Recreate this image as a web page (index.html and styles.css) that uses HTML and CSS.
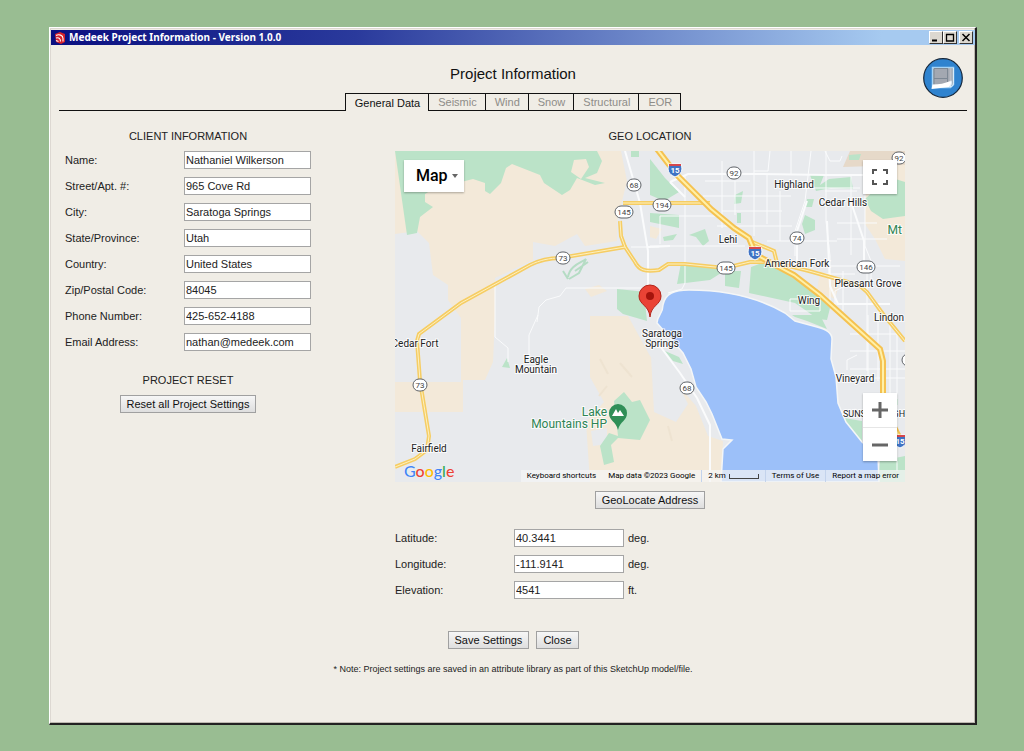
FILE: index.html
```
<!DOCTYPE html>
<html lang="en">
<head>
  <meta charset="UTF-8" />
  <meta name="viewport" content="width=device-width, initial-scale=1" />
  <title>Medeek Project Information - Version 1.0.0</title>
  <link rel="stylesheet" href="styles.css">
</head>
<body>

  <div class="window">
    <div class="title-bar">
      <svg class="app-icon" viewBox="0 0 12 12" aria-hidden="true">
        <path d="M1 2 6 0l5 2v8l-4 2-5-2z" fill="#d8222a" />
        <path d="M2 3.500c3-1.500 7-.5 7 3v3M2 6c3-.8 4.500.5 4.500 3.500M2 8.500l2.500 1" fill="none" stroke="#fff" stroke-width="1.100" />
      </svg>
      <span class="title-text">Medeek Project Information - Version 1.0.0</span>
      <div class="window-buttons">
        <button type="button" aria-label="Minimize">
          <svg viewBox="0 0 10 9"><path d="M1 7.500h5" stroke="#000" stroke-width="2" /></svg>
        </button>
        <button type="button" aria-label="Maximize">
          <svg viewBox="0 0 10 9"><path d="M1.500 1v7h7V1M1 1.500h8" fill="none" stroke="#000" stroke-width="1.300" /></svg>
        </button>
        <button type="button" class="close-button" aria-label="Close window">
          <svg viewBox="0 0 10 9"><path d="M1.500 1l7 7M8.500 1l-7 7" stroke="#000" stroke-width="1.500" /></svg>
        </button>
      </div>
    </div>

    <main class="content">
      <header class="page-header">
        <h1>Project Information</h1>
        <svg class="plan-icon" viewBox="0 0 40 40" aria-hidden="true">
          <circle cx="20" cy="20" r="19.300" fill="#2f83cf" stroke="#16283c" stroke-width="1.200" />
          <path d="M9.500 9.500h21v17l-3 3h-18z" fill="#a3a8b1" stroke="#a5d3f5" stroke-width="1.500" />
          <path d="M11 20.500h13M24.500 10v14M11 10.500h13M11 11v16" stroke="#7d8894" fill="none" />
          <path d="M27.500 10v14" stroke="#b7bcc5" stroke-width="2" />
          <path d="M8.500 31l1-4.500c7 0 12-1 18-3.500 2 2 1 5-1.500 6z" fill="#fff" />
          <path d="M28 22.500c1 2 .5 4-1.500 6 3 .5 4-1 4-4V10" fill="none" stroke="#d9ecfa" />
        </svg>
      </header>

      <nav class="tabs">
        <button type="button" class="tab active">General Data</button>
        <button type="button" class="tab">Seismic</button>
        <button type="button" class="tab">Wind</button>
        <button type="button" class="tab">Snow</button>
        <button type="button" class="tab">Structural</button>
        <button type="button" class="tab">EOR</button>
      </nav>

      <form>
        <div class="columns">
          <section class="client">
            <h2>CLIENT INFORMATION</h2>
            <div class="fields">
              <label for="name">Name:</label>
              <input type="text" id="name" value="Nathaniel Wilkerson">
              <label for="street">Street/Apt. #:</label>
              <input type="text" id="street" value="965 Cove Rd">
              <label for="city">City:</label>
              <input type="text" id="city" value="Saratoga Springs">
              <label for="state">State/Province:</label>
              <input type="text" id="state" value="Utah">
              <label for="country">Country:</label>
              <input type="text" id="country" value="United States">
              <label for="zip">Zip/Postal Code:</label>
              <input type="text" id="zip" value="84045">
              <label for="phone">Phone Number:</label>
              <input type="text" id="phone" value="425-652-4188">
              <label for="email">Email Address:</label>
              <input type="text" id="email" value="nathan@medeek.com">
            </div>
            <h2 class="reset-heading">PROJECT RESET</h2>
            <button type="button" class="btn">Reset all Project Settings</button>
          </section>

          <section class="geo">
            <h2>GEO LOCATION</h2>
            <div class="map">
              <svg class="map-drawing" viewBox="0 0 510 331" role="img" aria-label="Map of Saratoga Springs, Utah">
                <defs>
                  <g id="shield">
                    <path d="M-6-6h12c2 6 1 10-6 13-7-3-8-7-6-13z" fill="#3f73c4" stroke="#fff" />
                    <path d="M-6-6h12v2h-12z" fill="#d6474c" />
                    <text y="3" class="interstate">15</text>
                  </g>
                </defs>

                <!-- land -->
                <rect width="510" height="331" fill="#e8eaed" />
                <path class="sand" d="M0 0h226l6 30-10 40v20l-32 5-8-12-22 12-22-4v18l-38 18v38l-2 46-8 18H68v32H0v-30h66v-64l-13-18v-15l-15-10-4-32-12-12-22 3z" />
                <path class="sand" d="M190 138l14-4 8 6-16 6zM195 165h38l22 40 16 15 30 35 12 30 15 5-2 41H195l-4-60 18-20-14-25z" />
                <path class="town" d="M256 205l22 18 15 30-12 18-22-10zM196 280l16-3v16l-14 2z" />
                <path class="sand" d="M470 35l40-35v110l-20-2-10-20 -10-15zM425 120l20 10-5 18-18-8zM255 75l12 3-6 10-6-2z" />
                <path d="M455 0h55v14l-62 2z" fill="#e6d9c9" />

                <!-- parks -->
                <g class="park">
                  <path fill-rule="evenodd" d="M0 0h202l5 10-5 12-12 5 20 5-10 2-18-7-7 12-8 5-18-12-4-8-28-11-6 4-5 15-11 11-5-3v-8l-12-4-20 5-18 4-10 6v8l8 5-13 10-3 16-10 2zM179 9l-3 12 10 7 8-12-3-8z" />
                  <path d="M236 0h8v6h-8zM255 8l15 19 14 14-15 9-14-6zM255 62l29 2v13l-29-6zM268 86l14-3-4 6-9 1zM294 84l16-6 4 12-6 5-7-9zM340 44l8-4-2 12-7 1zM342 62l4 0v10h-4z" />
                  <path d="M286 112l30 3 18 2-19 12-33 4zM330 120h16l-2 17-14-2zM356 116l14-5 25 13 24 17 16 16-3 12-9-1-23-16-46-10z" />
                  <path d="M470 48l24-22 16 5v34l-22 3-12-8zM410 64l10 5 0 10-10 4-3-10zM415 24h14l-4 10 9-6 22-2 2 12-22-1-15 3zM454 4l12-1-2 6-10 0zM412 48l7 0-2 8-6 0z" />
                  <path d="M222 138l20 2 20 3-12 8 2 19-24-7-6-5zM219 250l10-9 8 10 8-2 10 20-10 20-22-2-7 7 3 17-10 3-4-19 9-13 9 3zM107 216l5-9 3 10zM270 200l14 6 4 7-10-3zM443 252l6 15 18 3v21l-16-9zM485 310l25-5v26h-27z" />
                  <path d="M397 164l28 0 7 14-20-8-12-4zM498 248l5 0v6h-5z" />
                </g>
                <path d="M173 126c2-12 13-14 18-18l-7 14-10 6M180 120l13-9M168 120l5 8" class="trail" />
                <path d="M205 208l8 15M212 235l-8 10M225 212l12 14M273 275l4 15" class="ridge" />

                <!-- lake -->
                <path d="M262 172c0-8 6-8 6-18 2-12 12-15 26-15 36 0 70 8 96 23l10 8 22 6c8 2 15 6 15 12l-1 20 5 18 2 26 8 19 16 20 16 14 1 26H326l2-33 9-9-10-1-10-25-6-12-10-15-5-18-8-16z" fill="#9cc0f9" stroke="#f4f6f7" stroke-width="1.500" />

                <!-- local roads -->
                <g class="local">
                  <path d="M100 134v52l13 11v14M142 171l2-15 7-7 14-4 6-8h80M143 164l-9 20v23M236 96h28M290 24v108l-3 6-14 4M255 95h95M265 65v28M265 65h62M327 10v67M340 30v34M359 0v85M359 20h14l2-20M372 23v50M385 40v50M310 30h45M308 45h88M327 60h60M322 75h75M372 90h70M431 0v70l4 35v48h60M456 24v80M400 105v-25l10-30 6-50M396 0v24M430 40h32M405 37h60M442 88h50M470 20v75l6 15v20M442 72h40M435 115h70M420 123h40M395 148h30v12h-30zM440 153v-13l10-5M448 120v40M472 110v110M483 160v70M495 170v95M502 180v140M445 227h65M455 218h55M455 200h55M455 183h50M452 219v-10l10-5M473 164v63" />
                  <path d="M430 0l5 10 10 0 2-5" />
                </g>
                <path class="major" d="M230 0l15 52 8 48v45M275 31l18-8 70 0 68 1h45M275 31l15 15M253 96l22-1M412 50l-10 30v30M455 48l14 42v30M432 70l3 65 8 18h52M265 195l20 27 17 25 13 27v57" />

                <!-- state highways -->
                <g class="highway">
                  <path d="M0 316l20-8 12-9 2-14-9-55-3-40 2-7 42-31 69-38c10-5 20-7 30-7l65-11 10 15c4 8 10 10 24 8l9-6 17 0 40 4 25-6h25" />
                  <path d="M225 70l1 15 4 11M228 52h87" />
                  <path d="M355 90l24 10 3 12 32 8 50 14 8 7 16 22 22 27" />
                </g>
                <g class="highway-core">
                  <path d="M0 316l20-8 12-9 2-14-9-55-3-40 2-7 42-31 69-38c10-5 20-7 30-7l65-11 10 15c4 8 10 10 24 8l9-6 17 0 40 4 25-6h25" />
                  <path d="M225 70l1 15 4 11M228 52h87M355 90l24 10 3 12 32 8 50 14 8 7 16 22 22 27" />
                </g>
                <path class="freeway" d="M262-2l20 26 34 34 23 19 15 10 7 17 38 20 26 20 60 54 3 12v44l20 40" />
                <path class="freeway-core" d="M262-2l20 26 34 34 23 19 15 10 7 17 38 20 26 20 60 54 3 12v44l20 40" />

                <!-- route markers -->
                <use href="#shield" x="280" y="19" />
                <use href="#shield" x="360" y="102" />
                <use href="#shield" x="505" y="290" />
                <g class="route">
                  <rect x="232" y="28" width="14" height="12" rx="6" /><text x="239" y="37">68</text>
                  <rect x="220" y="55" width="18" height="12" rx="6" /><text x="229" y="64">145</text>
                  <rect x="258" y="48" width="18" height="12" rx="6" /><text x="267" y="57">194</text>
                  <rect x="332" y="16" width="14" height="12" rx="6" /><text x="339" y="25">92</text>
                  <rect x="497" y="1" width="14" height="12" rx="6" /><text x="504" y="10">92</text>
                  <rect x="161" y="101" width="14" height="12" rx="6" /><text x="168" y="110">73</text>
                  <rect x="395" y="81" width="14" height="12" rx="6" /><text x="402" y="90">74</text>
                  <rect x="322" y="111" width="18" height="12" rx="6" /><text x="331" y="120">145</text>
                  <rect x="462" y="110" width="18" height="12" rx="6" /><text x="471" y="119">146</text>
                  <rect x="18" y="228" width="14" height="12" rx="6" /><text x="25" y="237">73</text>
                  <rect x="285" y="231" width="14" height="12" rx="6" /><text x="292" y="240">68</text>
                  <rect x="507" y="203" width="14" height="12" rx="6" />
                </g>

                <!-- place names -->
                <g class="place">
                  <text x="399" y="37">Highland</text>
                  <text x="448" y="55">Cedar Hills</text>
                  <text x="333" y="92">Lehi</text>
                  <text x="402" y="116">American Fork</text>
                  <text x="473" y="136">Pleasant Grove</text>
                  <text x="414" y="153">Wing</text>
                  <text x="494" y="170">Lindon</text>
                  <text x="460" y="231">Vineyard</text>
                  <text x="267" y="186">Saratoga</text>
                  <text x="267" y="196">Springs</text>
                  <text x="141" y="212">Eagle</text>
                  <text x="141" y="222">Mountain</text>
                  <text x="20" y="196">Cedar Fort</text>
                  <text x="34" y="301">Fairfield</text>
                </g>
                <text x="448" y="266" class="district">SUNSET HEIGHTS</text>
                <text x="212" y="265" class="park-name">Lake</text>
                <text x="212" y="277" class="park-name">Mountains HP</text>
                <text x="507" y="83" class="park-name">Mt</text>
                <path d="M223 279c-2-9-9-9-9-17a9 9 0 0 1 18 0c0 8-7 8-9 17z" fill="#2f8f57" />
                <path d="M217 265l4-7 2 4 2-3 4 6z" fill="#fff" />

                <!-- selected location -->
                <path d="M255 166c-1-12-11-12-11-21a11 11 0 0 1 22 0c0 9-10 9-11 21z" fill="#ea4335" stroke="#b3251b" />
                <circle cx="255" cy="145" r="4" fill="#a5140c" />
              </svg>

              <button type="button" class="map-type">Map <span class="caret"></span></button>
              <button type="button" class="map-control fullscreen" aria-label="Toggle fullscreen view">
                <svg viewBox="0 0 16 16"><path d="M1 5V1h4M11 1h4v4M15 11v4h-4M5 15H1v-4" fill="none" stroke="#555" stroke-width="2" /></svg>
              </button>
              <div class="zoom">
                <button type="button" class="map-control" aria-label="Zoom in">
                  <svg viewBox="0 0 16 16"><path d="M0 8h16M8 0v16" stroke="#666" stroke-width="3" /></svg>
                </button>
                <button type="button" class="map-control" aria-label="Zoom out">
                  <svg viewBox="0 0 16 16"><path d="M0 8h16" stroke="#666" stroke-width="3" /></svg>
                </button>
              </div>
              <a href="#" class="logo"><span class="blue">G</span><span class="red">o</span><span class="yellow">o</span><span class="blue">g</span><span class="green">l</span><span class="red">e</span></a>
              <div class="attribution">
                <a href="#">Keyboard shortcuts</a>
                <span>Map data ©2023 Google</span>
                <span class="scale">2 km <i class="scale-bar"></i></span>
                <a href="#">Terms of Use</a>
                <a href="#">Report a map error</a>
              </div>
            </div>
            <button type="button" class="btn">GeoLocate Address</button>
            <div class="fields coords">
              <label for="latitude">Latitude:</label>
              <input type="text" id="latitude" value="40.3441">
              <span>deg.</span>
              <label for="longitude">Longitude:</label>
              <input type="text" id="longitude" value="-111.9141">
              <span>deg.</span>
              <label for="elevation">Elevation:</label>
              <input type="text" id="elevation" value="4541">
              <span>ft.</span>
            </div>
          </section>
        </div>

        <div class="actions">
          <button type="submit" class="btn">Save Settings</button>
          <button type="button" class="btn">Close</button>
        </div>
        <p class="note">* Note: Project settings are saved in an attribute library as part of this SketchUp model/file.</p>
      </form>
    </main>
  </div>

</body>
</html>
```
FILE: styles.css
```
* {
  box-sizing: border-box;
}

body {
  display: flex;
  min-height: 100vh;
  margin: 0;
  padding: 27px 47px 26px 49px;
  background-color: #99bd92;
  color: #222;
  font-family: "Liberation Sans", Arial, sans-serif;
  font-size: 11px;
  line-height: 18px;
}

button,
input {
  font: inherit;
  color: inherit;
}

.window {
  flex: 1;
  border: 1px solid #fff;
  border-right: 2px solid #222;
  border-bottom: 2px solid #222;
  padding: 2px 0 1px 1px;
  background-color: #f0ede6;
  box-shadow: inset -1px -1px #bdb8b0, inset 1px 1px #ddd8d2;
}

/* Title bar */
.title-bar {
  display: flex;
  align-items: center;
  height: 15px;
  padding: 0 2px 0 3px;
  background: linear-gradient(to right, #0a0f80, #2a3a9c 33%, #a6caf0 90%);
}

.app-icon {
  width: 12px;
  height: 12px;
  margin-right: 3px;
}

.title-text {
  flex: 1;
  color: #fff;
  font-family: Tahoma, "Noto Sans", sans-serif;
  font-size: 10px;
  font-weight: bold;
  line-height: 15px;
}

.window-buttons {
  display: flex;
}

.window-buttons button {
  display: flex;
  align-items: center;
  justify-content: center;
  width: 14px;
  height: 13px;
  padding: 0;
  border: 1px solid;
  border-color: #fff #333 #333 #fff;
  background-color: #dcd8d0;
}

.window-buttons .close-button {
  margin-left: 2px;
}

.window-buttons svg {
  width: 10px;
  height: 9px;
}

.content {
  padding: 0 8px 16px;
}

.page-header {
  position: relative;
  height: 48px;
  padding-top: 19px;
  text-align: center;
}

h1 {
  margin: 0;
  color: #111;
  font-size: 15px;
  font-weight: normal;
  line-height: 20px;
}

.plan-icon {
  position: absolute;
  top: 13px;
  right: 4px;
  width: 40px;
  height: 40px;
}

/* Tabs */
.tabs {
  display: flex;
  justify-content: center;
  border-bottom: 1px solid #111;
}

.tab {
  height: 17px;
  padding: 0 8px 0 9px;
  border: 1px solid #111;
  border-width: 1px 1px 0 0;
  background-color: #f0ede6;
  color: #8e8c88;
  line-height: 16px;
}

.tab.active {
  height: 18px;
  margin-bottom: -1px;
  border-left-width: 1px;
  color: #111;
}

/* Columns */
.columns {
  display: grid;
  grid-template-columns: 246fr 510fr;
  gap: 84px;
  padding: 16px 62px 0 6px;
}

.client,
.geo {
  display: flex;
  flex-direction: column;
  align-items: center;
}

h2 {
  margin: 0 0 6px;
  font-size: 11px;
  font-weight: normal;
  line-height: 18px;
}

.fields {
  display: grid;
  grid-template-columns: 119px 1fr;
  gap: 8px 0;
  width: 100%;
}

.fields input {
  width: 100%;
  height: 18px;
  padding: 0 1px;
  border: 1px solid #a5a5a5;
  background-color: #fff;
}

.reset-heading {
  margin-top: 20px;
}

.btn {
  height: 18px;
  padding: 0 6px;
  border: 1px solid #a0a0a0;
  background: linear-gradient(#f6f6f6, #dedede);
  color: #111;
  line-height: 16px;
}

.coords {
  grid-template-columns: 119px 110px 1fr;
  margin-top: 20px;
}

.coords span {
  padding-left: 4px;
}

.actions {
  display: flex;
  justify-content: center;
  gap: 7px;
  margin-top: 32px;
}

.note {
  margin: 11px 0 0;
  font-size: 9px;
  text-align: center;
}

/* Map */
.map {
  position: relative;
  width: 100%;
  margin-bottom: 9px;
  overflow: hidden;
  font-family: Roboto, sans-serif;
}

.map-drawing {
  display: block;
  width: 100%;
}

.sand { fill: #f3e9d9; }
.town { fill: #e8eaed; }
.park { fill: #bbe3c8; }

.trail,
.ridge {
  fill: none;
  stroke: #b5dcc4;
  stroke-width: 2;
}

.ridge {
  stroke: #eee3d1;
}

.local,
.major {
  fill: none;
  stroke: #fafbfc;
}

.major {
  stroke-width: 2;
}

.highway,
.freeway {
  fill: none;
  stroke: #f6cd63;
  stroke-width: 4;
}

.highway-core,
.freeway-core {
  fill: none;
  stroke: #fdf0c0;
  stroke-width: 1;
}

.freeway {
  stroke: #f5c250;
  stroke-width: 6;
}

.freeway-core {
  stroke: #fff0a8;
  stroke-width: 2;
}

.map-drawing text {
  text-anchor: middle;
}

.route rect {
  fill: #fff;
  stroke: #5f6368;
}

.route text {
  fill: #444;
  font-size: 8px;
}

.interstate {
  fill: #fff;
  font-size: 8px;
  font-weight: bold;
}

.place text,
.district,
.map-drawing .park-name {
  fill: #222;
  stroke: #fff;
  stroke-opacity: 0.8;
  stroke-width: 2px;
  paint-order: stroke;
  font-size: 10px;
}

.map-drawing .district {
  text-anchor: start;
  font-size: 9px;
}

.map-drawing .park-name {
  fill: #2f8454;
  font-size: 12px;
  text-anchor: end;
}

.map-type {
  position: absolute;
  top: 9px;
  left: 9px;
  display: flex;
  align-items: center;
  gap: 4px;
  height: 32px;
  padding: 0 6px 0 12px;
  border: 0;
  background-color: #fff;
  box-shadow: 0 1px 2px rgba(0, 0, 0, 0.3);
  color: #000;
  font-size: 16px;
  font-weight: 500;
}

.caret {
  border: 3px solid transparent;
  border-top: 4px solid #666;
  border-bottom: 0;
}

.map-control {
  display: flex;
  align-items: center;
  justify-content: center;
  width: 34px;
  height: 34px;
  padding: 0;
  border: 0;
  background-color: #fff;
}

.map-control svg {
  width: 16px;
  height: 16px;
}

.fullscreen {
  position: absolute;
  top: 9px;
  right: 8px;
  box-shadow: 0 1px 2px rgba(0, 0, 0, 0.3);
}

.zoom {
  position: absolute;
  right: 8px;
  bottom: 21px;
  background-color: #fff;
  box-shadow: 0 1px 2px rgba(0, 0, 0, 0.3);
}

.zoom .map-control + .map-control {
  border-top: 1px solid #e6e6e6;
}

.logo {
  position: absolute;
  bottom: 1px;
  left: 9px;
  font-family: Lato, sans-serif;
  font-size: 16px;
  font-weight: 500;
  line-height: 20px;
  text-decoration: none;
  text-shadow: 0 0 1px #fff;
}

.blue { color: #4285f4; }
.red { color: #ea4335; }
.yellow { color: #fbbc05; }
.green { color: #34a853; }

.attribution {
  position: absolute;
  right: 0;
  bottom: 0;
  display: flex;
  background-color: rgba(245, 245, 245, 0.7);
  color: #000;
  font-size: 8px;
  line-height: 12px;
}

.attribution > * {
  padding: 0 6px;
  color: inherit;
  text-decoration: none;
}

.attribution .scale,
.scale ~ a {
  border-left: 1px solid #c3d3ec;
}

.scale {
  display: flex;
  align-items: center;
  gap: 3px;
}

.scale-bar {
  width: 30px;
  height: 5px;
  border: 1px solid #444;
  border-top: 0;
}
```
